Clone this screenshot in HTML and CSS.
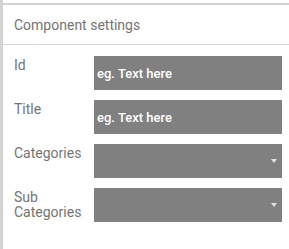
FILE: index.html
```html
<!DOCTYPE html>
<html lang="en">
<head>
    <meta charset="UTF-8">
    <title>Component settings</title>
    <link rel="stylesheet" href="styles.css">
</head>
<body>
    <div class="panel">
        <div class="panel-head">Component settings</div>
        <div class="panel-body">
            <div class="field">
                <label for="comp-id">Id</label>
                <input type="text" id="comp-id" class="text-input" value="eg. Text here">
            </div>
            <div class="field">
                <label for="comp-title">Title</label>
                <input type="text" id="comp-title" class="text-input" value="eg. Text here">
            </div>
            <div class="field">
                <label>Categories</label>
                <div class="select-box"><span class="caret"></span></div>
            </div>
            <div class="field">
                <label>Sub Categories</label>
                <div class="select-box"><span class="caret"></span></div>
            </div>
        </div>
    </div>
</body>
</html>
```

FILE: styles.css
```css
* {
    margin: 0;
    padding: 0;
    box-sizing: border-box;
}

body {
    font-family: Roboto, "Noto Sans", Arial, sans-serif;
    background-color: #fff;
}

.panel {
    border-left: 3px solid #d3d3d3;
    padding-top: 3px;
    min-height: 249px;
}

.panel-head {
    border-top: 2px solid #d3d3d3;
    border-bottom: 1px solid #d6d6d6;
    height: 42px;
    padding-left: 11px;
    display: flex;
    align-items: center;
    font-size: 14px;
    color: #757575;
}

.panel-body {
    padding: 11px 7px 0 11px;
}

.field {
    display: flex;
    margin-bottom: 10px;
}

.field label {
    width: 80px;
    flex-shrink: 0;
    padding-top: 2px;
    padding-right: 8px;
    font-size: 14px;
    line-height: 15px;
    color: #757575;
}

.text-input,
.select-box {
    flex-grow: 1;
    height: 34px;
    background-color: #808080;
    border: none;
}

.text-input {
    padding: 0 3px;
    font-family: Roboto, Arial, sans-serif;
    font-size: 13px;
    font-weight: 500;
    color: #fff;
    outline: none;
}

.select-box {
    display: flex;
    align-items: center;
    justify-content: flex-end;
    padding-right: 5px;
}

.caret {
    width: 0;
    height: 0;
    border-left: 3.5px solid transparent;
    border-right: 3.5px solid transparent;
    border-top: 4px solid #e2e2e2;
}
```
